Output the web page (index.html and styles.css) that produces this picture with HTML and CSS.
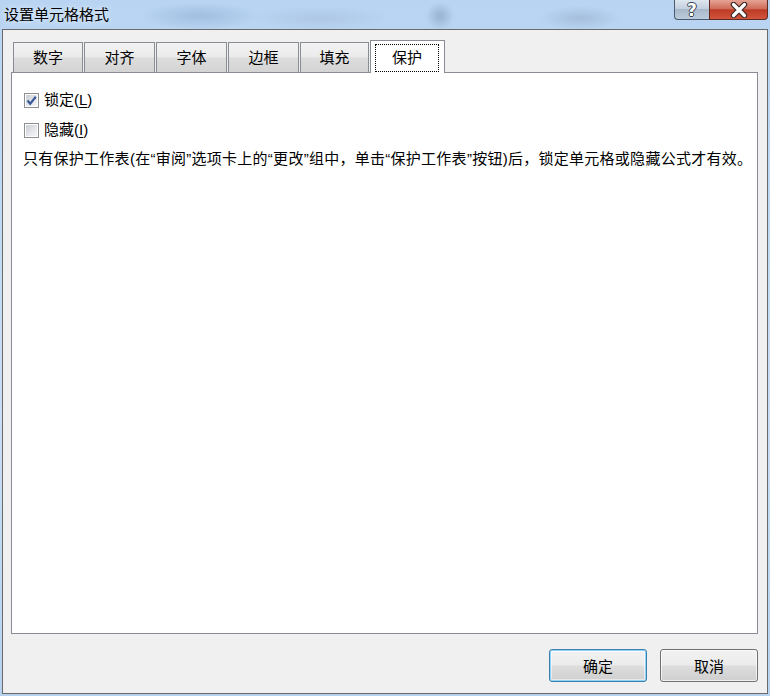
FILE: index.html
```html
<!DOCTYPE html>
<html lang="zh-CN">
<head>
    <meta charset="UTF-8">
    <meta name="viewport" content="width=device-width, initial-scale=1.0">
    <title>设置单元格格式</title>
    <link rel="stylesheet" href="styles.css">
</head>
<body>
    <div class="window">
        <div class="titlebar">
            <span class="title">设置单元格格式</span>
            <div class="caption-btns">
                <span class="cap-btn cap-help">?</span>
                <span class="cap-btn cap-close">
                    <svg width="22" height="16" viewBox="0 0 22 16">
                        <path d="M5.5 2.5 L16.5 13.5 M16.5 2.5 L5.5 13.5" stroke="#3a2a28" stroke-width="5.5" stroke-linecap="round"/>
                        <path d="M5.5 2.5 L16.5 13.5 M16.5 2.5 L5.5 13.5" stroke="#ffffff" stroke-width="3.2" stroke-linecap="round"/>
                    </svg>
                </span>
            </div>
        </div>

        <div class="client">
            <!-- pestañas -->
            <div class="tabs">
                <div class="tab">数字</div>
                <div class="tab tab-wide">对齐</div>
                <div class="tab tab-wide">字体</div>
                <div class="tab tab-wide">边框</div>
                <div class="tab tab-narrow">填充</div>
                <div class="tab tab-active"><span class="focus">保护</span></div>
            </div>

            <div class="panel">
                <div class="check-row">
                    <span class="checkbox">
                        <span class="check-inner"></span>
                        <svg class="check-mark" width="15" height="15" viewBox="0 0 15 15">
                            <path d="M3.5 7.5 L6.2 10.8 L11.8 3.8" fill="none" stroke="#3c5a9a" stroke-width="2.2"/>
                        </svg>
                    </span>
                    <span class="label">锁定(<u>L</u>)</span>
                </div>
                <div class="check-row">
                    <span class="checkbox"><span class="check-inner"></span></span>
                    <span class="label">隐藏(<u>I</u>)</span>
                </div>
                <p class="note">只有保护工作表(在“审阅”选项卡上的“更改”组中，单击“保护工作表”按钮)后，锁定单元格或隐藏公式才有效。</p>
            </div>

            <div class="buttons">
                <button class="btn btn-default">确定</button>
                <button class="btn">取消</button>
            </div>
        </div>
    </div>
</body>
</html>
```

FILE: styles.css
```css
:root {
    --face-color: #f0f0f0;
    --border-color: #898c95;
    --text-color: #000000;
    --ui-font: "Liberation Sans", "Noto Sans CJK SC", sans-serif;
}

* {
    margin: 0;
    padding: 0;
    box-sizing: border-box;
}

body {
    font-family: var(--ui-font);
    font-size: 15px;
    color: var(--text-color);
    background: #bcd6f1;
}

.window {
    width: 770px;
    height: 696px;
    display: flex;
    flex-direction: column;
    padding: 0 2px 2px 2px;
    background:
        radial-gradient(ellipse 60px 14px at 200px 16px, rgba(120, 150, 190, 0.35), transparent),
        radial-gradient(ellipse 70px 12px at 320px 18px, rgba(150, 170, 200, 0.3), transparent),
        radial-gradient(ellipse 14px 14px at 440px 16px, rgba(90, 110, 150, 0.35), transparent),
        radial-gradient(ellipse 40px 12px at 580px 18px, rgba(120, 140, 170, 0.3), transparent),
        linear-gradient(to bottom, #b8d4f2, #c8def5 60%, #b6d2ef);
}

/* barra de título */
.titlebar {
    height: 29px;
    flex-shrink: 0;
    display: flex;
    align-items: flex-start;
}

.title {
    padding: 4px 0 0 2px;
    line-height: 20px;
    font-family: "Noto Sans CJK SC", sans-serif;
    text-shadow: 0 0 6px rgba(255, 255, 255, 0.9);
}

.caption-btns {
    display: flex;
    margin-left: auto;
}

.cap-btn {
    height: 20px;
    display: flex;
    align-items: center;
    justify-content: center;
    border: 1px solid #4b5a6c;
    border-top: none;
}

.cap-help {
    width: 35px;
    border-radius: 0 0 0 4px;
    border-right: none;
    background: linear-gradient(to bottom, #dfe7f0, #c3d0de 45%, #a9b9cb 50%, #bccbdc);
    color: #ffffff;
    font-family: "DejaVu Sans", sans-serif;
    font-weight: bold;
    font-size: 17px;
    line-height: 18px;
    text-shadow: 1px 0 0 #33404f, -1px 0 0 #33404f, 0 1px 0 #33404f, 0 -1px 0 #33404f;
}

.cap-close {
    width: 59px;
    border-radius: 0 0 4px 0;
    border-color: #5e2a22;
    background: linear-gradient(to bottom, #e4a395, #d06d5b 45%, #bd3a25 52%, #d2553c);
}

/* área de cliente */
.client {
    flex: 1;
    display: flex;
    flex-direction: column;
    background-color: var(--face-color);
    border: 1px solid #6a6a6a;
    padding: 10px 9px 11px 8px;
}

.tabs {
    display: flex;
    align-items: flex-end;
    gap: 1px;
    height: 33px;
    margin: 0 0 -1px 2px;
}

.tab {
    width: 70px;
    height: 31px;
    border: 1px solid var(--border-color);
    border-bottom: none;
    background: linear-gradient(to bottom, #f2f2f2, #ebebeb 45%, #dddddd 50%, #d3d3d3);
    display: flex;
    align-items: center;
    justify-content: center;
    line-height: 20px;
    padding-bottom: 1px;
}

.tab-wide {
    width: 71px;
}

.tab-narrow {
    width: 69px;
}

.tab-active {
    position: relative;
    z-index: 1;
    width: 75px;
    height: 33px;
    background: #ffffff;
    padding: 3px 5px 1px 4px;
}

.focus {
    width: 100%;
    height: 100%;
    display: flex;
    align-items: center;
    justify-content: center;
    border: 1px dotted #000000;
}

.panel {
    height: 562px;
    background-color: #ffffff;
    border: 1px solid var(--border-color);
    padding: 12px 0 0 11px;
}

.check-row {
    height: 30px;
    display: flex;
    align-items: center;
    gap: 5px;
}

.checkbox {
    position: relative;
    width: 15px;
    height: 15px;
    margin-left: 1px;
    border: 1px solid #8e8f8f;
    background: #ffffff;
    padding: 1px;
}

.check-inner {
    display: block;
    width: 100%;
    height: 100%;
    background: linear-gradient(135deg, #c9cdd3, #e6e8eb 60%, #f5f5f5);
}

.check-mark {
    position: absolute;
    top: -1px;
    left: -1px;
}

.label {
    line-height: 20px;
}

.label u {
    text-underline-offset: 2px;
}

.note {
    line-height: 28px;
    white-space: nowrap;
    letter-spacing: 0.27px;
}

.buttons {
    display: flex;
    justify-content: flex-end;
    gap: 13px;
    margin-top: 15px;
}

.btn {
    width: 98px;
    height: 33px;
    font-family: var(--ui-font);
    font-size: 15px;
    color: var(--text-color);
    border: 1px solid #707070;
    border-radius: 3px;
    background: linear-gradient(to bottom, #f2f2f2, #ebebeb 48%, #dddddd 52%, #cfcfcf);
    box-shadow: inset 0 0 0 1px rgba(255, 255, 255, 0.7);
}

.btn-default {
    border-color: #3c7fb1;
    box-shadow: inset 0 0 0 1px #8fd3f5, inset 0 0 0 2px rgba(255, 255, 255, 0.5);
}
```
